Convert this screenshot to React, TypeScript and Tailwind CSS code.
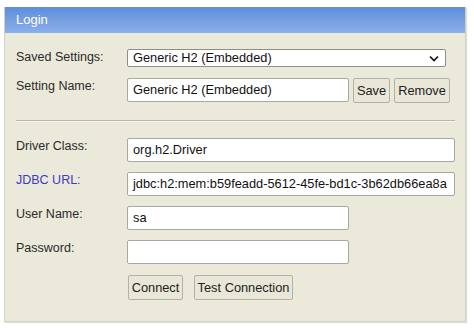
import React from "react";

const font = { fontFamily: '"Liberation Sans", Arial, sans-serif' };

function Label({ children, blue }: { children: React.ReactNode; blue?: boolean }) {
  return (
    <div className={`w-[122px] shrink-0 pl-[11px] pt-[1px] leading-[15px] ${blue ? "text-[#3b3bc4]" : "text-[#2a2a2a]"}`}>
      {children}
    </div>
  );
}

function Input({ value, w }: { value?: string; w: string }) {
  return (
    <div className={`${w} h-[24px] bg-white border border-[#a9a8a0] rounded-[2px] pl-[5px] pr-[3px] flex items-center text-[12.8px] text-[#111] whitespace-nowrap overflow-hidden`}>
      {value}
    </div>
  );
}

function Btn({ children, w }: { children: React.ReactNode; w: string }) {
  return (
    <div className={`${w} h-[25px] bg-[#e9e7d8] border border-[#b3b1a3] rounded-[2px] flex items-center justify-center text-[12.8px] text-[#222]`}>
      {children}
    </div>
  );
}

export default function App() {
  return (
    <div className="w-[474px] h-[329px] bg-white pt-[7px] pl-[4px] text-[12.5px]" style={font}>
      <div className="w-[462px] h-[315px] bg-[#ebe9da] border-r border-b border-l border-[#d2d0c2] shadow-[1px_1px_1px_rgba(0,0,0,0.12)]">
        <div className="h-[26px] bg-gradient-to-b from-[#5f8dd9] to-[#8bb0ea] flex items-center pl-[11px] text-white text-[13px]">
          Login
        </div>
        <div className="pt-[16px]">
          <div className="flex items-start">
            <Label>Saved Settings:</Label>
            <div className="w-[319px] h-[18px] bg-white border border-[#8f8e88] rounded-[2px] flex items-center justify-between pl-[5px] pr-[6px] text-[12.8px] text-[#111]">
              <span>Generic H2 (Embedded)</span>
              <svg width="10" height="7" viewBox="0 0 10 7">
                <path d="M1 1.5 L5 5.5 L9 1.5" fill="none" stroke="#111" strokeWidth="1.6" />
              </svg>
            </div>
          </div>
          <div className="flex items-start mt-[11px]">
            <Label>Setting Name:</Label>
            <div className="flex gap-[4px] items-start">
              <Input value="Generic H2 (Embedded)" w="w-[222px]" />
              <Btn w="w-[37px]">Save</Btn>
              <Btn w="w-[56px]">Remove</Btn>
            </div>
          </div>
          <div className="ml-[11px] mr-[10px] mt-[17px] border-t border-[#b9b7aa] border-b border-b-[#f7f6ee]" />
          <div className="flex items-start mt-[16px]">
            <Label>Driver Class:</Label>
            <Input value="org.h2.Driver" w="w-[328px]" />
          </div>
          <div className="flex items-start mt-[10px]">
            <Label blue>JDBC URL:</Label>
            <Input value="jdbc:h2:mem:b59feadd-5612-45fe-bd1c-3b62db66ea8a" w="w-[328px]" />
          </div>
          <div className="flex items-start mt-[10px]">
            <Label>User Name:</Label>
            <Input value="sa" w="w-[222px]" />
          </div>
          <div className="flex items-start mt-[10px]">
            <Label>Password:</Label>
            <Input w="w-[222px]" />
          </div>
          <div className="flex items-start mt-[11px] pl-[123px] gap-[11px]">
            <Btn w="w-[55px]">Connect</Btn>
            <Btn w="w-[99px]">Test Connection</Btn>
          </div>
        </div>
      </div>
    </div>
  );
}
